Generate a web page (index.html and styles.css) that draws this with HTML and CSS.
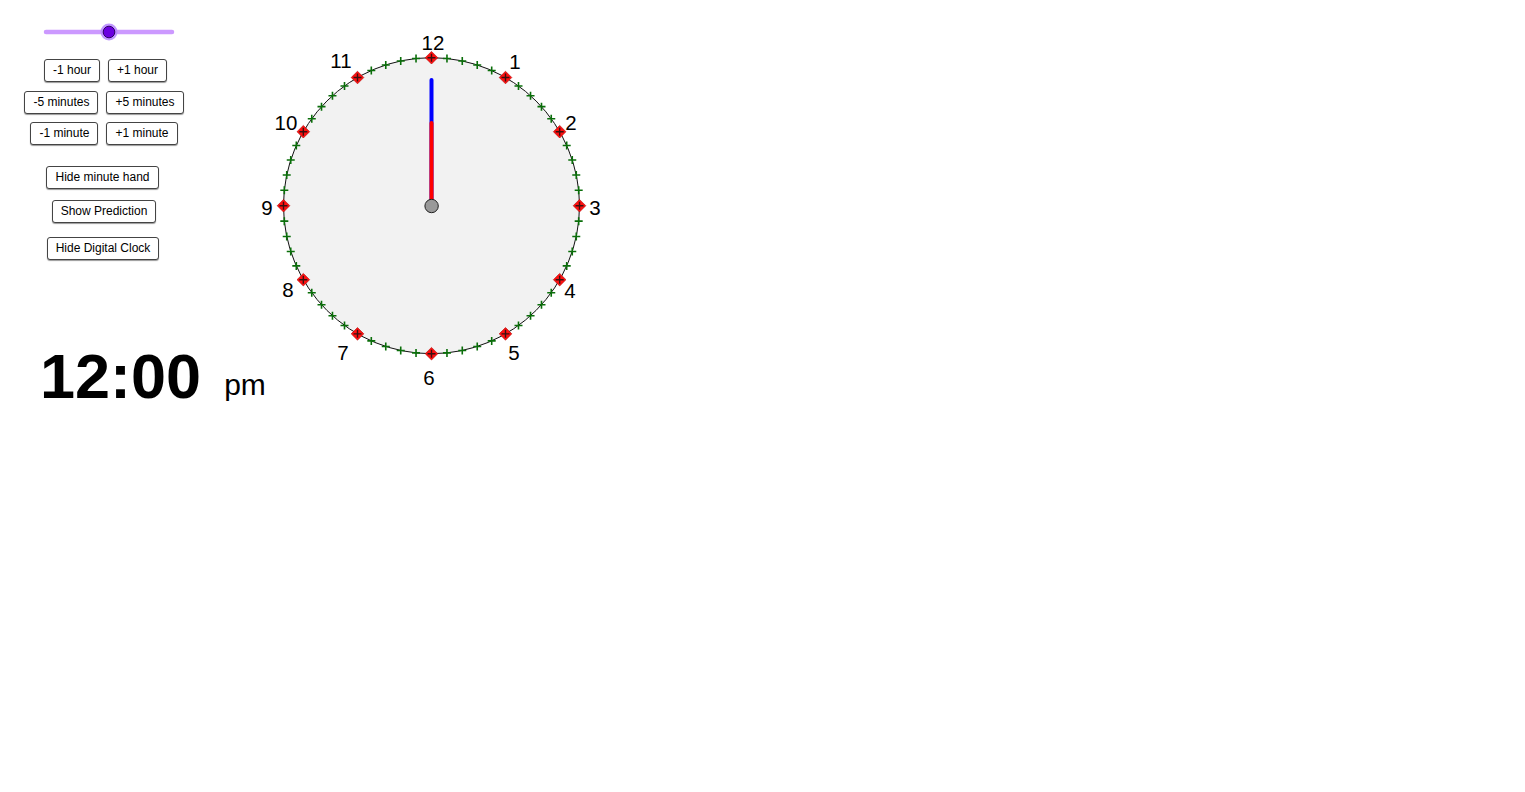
FILE: index.html
```html
<!DOCTYPE html>
<html>
<head>
<meta charset="utf-8">
<title>Clock</title>
<link rel="stylesheet" href="styles.css">
</head>
<body>
<div class="app">
  <div class="side">
    <div class="controls">
      <svg class="slider" width="140" height="18" viewBox="0 0 140 18">
        <line x1="7" y1="9" x2="133" y2="9" class="track"/>
        <circle cx="70" cy="9" r="8.5" class="halo"/>
        <circle cx="70" cy="9" r="5.8" class="knob"/>
      </svg>
      <div class="row row1">
        <button class="btn">-1 hour</button>
        <button class="btn">+1 hour</button>
      </div>
      <div class="row row2">
        <button class="btn">-5 minutes</button>
        <button class="btn">+5 minutes</button>
      </div>
      <div class="row row3">
        <button class="btn">-1 minute</button>
        <button class="btn">+1 minute</button>
      </div>
      <button class="btn wide hide-minute">Hide minute hand</button>
      <button class="btn wide show-pred">Show Prediction</button>
      <button class="btn wide hide-digital">Hide Digital Clock</button>
    </div>
    <div class="digital"><span class="time">12:00</span><span class="ampm">pm</span></div>
  </div>

  <svg class="clock" width="360" height="400" viewBox="255 0 360 400">
    <defs>
      <g id="m"><path d="M-4 0H4M0 -4V4" class="tick"/></g>
      <g id="h"><path d="M0 -6.3L6.3 0L0 6.3L-6.3 0Z" class="diamond"/><path d="M-4 0H4M0 -4V4" class="hplus"/></g>
    </defs>
    <circle cx="431.5" cy="205.7" r="148" class="face"/>
    <g class="ticks">
      <use href="#m" transform="rotate(0 431.5 205.7) translate(431.5 57.7) rotate(0)"/>
      <use href="#m" transform="rotate(6 431.5 205.7) translate(431.5 57.7) rotate(-6)"/>
      <use href="#m" transform="rotate(12 431.5 205.7) translate(431.5 57.7) rotate(-12)"/>
      <use href="#m" transform="rotate(18 431.5 205.7) translate(431.5 57.7) rotate(-18)"/>
      <use href="#m" transform="rotate(24 431.5 205.7) translate(431.5 57.7) rotate(-24)"/>
      <use href="#m" transform="rotate(36 431.5 205.7) translate(431.5 57.7) rotate(-36)"/>
      <use href="#m" transform="rotate(42 431.5 205.7) translate(431.5 57.7) rotate(-42)"/>
      <use href="#m" transform="rotate(48 431.5 205.7) translate(431.5 57.7) rotate(-48)"/>
      <use href="#m" transform="rotate(54 431.5 205.7) translate(431.5 57.7) rotate(-54)"/>
      <use href="#m" transform="rotate(66 431.5 205.7) translate(431.5 57.7) rotate(-66)"/>
      <use href="#m" transform="rotate(72 431.5 205.7) translate(431.5 57.7) rotate(-72)"/>
      <use href="#m" transform="rotate(78 431.5 205.7) translate(431.5 57.7) rotate(-78)"/>
      <use href="#m" transform="rotate(84 431.5 205.7) translate(431.5 57.7) rotate(-84)"/>
      <use href="#m" transform="rotate(96 431.5 205.7) translate(431.5 57.7) rotate(-96)"/>
      <use href="#m" transform="rotate(102 431.5 205.7) translate(431.5 57.7) rotate(-102)"/>
      <use href="#m" transform="rotate(108 431.5 205.7) translate(431.5 57.7) rotate(-108)"/>
      <use href="#m" transform="rotate(114 431.5 205.7) translate(431.5 57.7) rotate(-114)"/>
      <use href="#m" transform="rotate(126 431.5 205.7) translate(431.5 57.7) rotate(-126)"/>
      <use href="#m" transform="rotate(132 431.5 205.7) translate(431.5 57.7) rotate(-132)"/>
      <use href="#m" transform="rotate(138 431.5 205.7) translate(431.5 57.7) rotate(-138)"/>
      <use href="#m" transform="rotate(144 431.5 205.7) translate(431.5 57.7) rotate(-144)"/>
      <use href="#m" transform="rotate(156 431.5 205.7) translate(431.5 57.7) rotate(-156)"/>
      <use href="#m" transform="rotate(162 431.5 205.7) translate(431.5 57.7) rotate(-162)"/>
      <use href="#m" transform="rotate(168 431.5 205.7) translate(431.5 57.7) rotate(-168)"/>
      <use href="#m" transform="rotate(174 431.5 205.7) translate(431.5 57.7) rotate(-174)"/>
      <use href="#m" transform="rotate(186 431.5 205.7) translate(431.5 57.7) rotate(-186)"/>
      <use href="#m" transform="rotate(192 431.5 205.7) translate(431.5 57.7) rotate(-192)"/>
      <use href="#m" transform="rotate(198 431.5 205.7) translate(431.5 57.7) rotate(-198)"/>
      <use href="#m" transform="rotate(204 431.5 205.7) translate(431.5 57.7) rotate(-204)"/>
      <use href="#m" transform="rotate(216 431.5 205.7) translate(431.5 57.7) rotate(-216)"/>
      <use href="#m" transform="rotate(222 431.5 205.7) translate(431.5 57.7) rotate(-222)"/>
      <use href="#m" transform="rotate(228 431.5 205.7) translate(431.5 57.7) rotate(-228)"/>
      <use href="#m" transform="rotate(234 431.5 205.7) translate(431.5 57.7) rotate(-234)"/>
      <use href="#m" transform="rotate(246 431.5 205.7) translate(431.5 57.7) rotate(-246)"/>
      <use href="#m" transform="rotate(252 431.5 205.7) translate(431.5 57.7) rotate(-252)"/>
      <use href="#m" transform="rotate(258 431.5 205.7) translate(431.5 57.7) rotate(-258)"/>
      <use href="#m" transform="rotate(264 431.5 205.7) translate(431.5 57.7) rotate(-264)"/>
      <use href="#m" transform="rotate(276 431.5 205.7) translate(431.5 57.7) rotate(-276)"/>
      <use href="#m" transform="rotate(282 431.5 205.7) translate(431.5 57.7) rotate(-282)"/>
      <use href="#m" transform="rotate(288 431.5 205.7) translate(431.5 57.7) rotate(-288)"/>
      <use href="#m" transform="rotate(294 431.5 205.7) translate(431.5 57.7) rotate(-294)"/>
      <use href="#m" transform="rotate(306 431.5 205.7) translate(431.5 57.7) rotate(-306)"/>
      <use href="#m" transform="rotate(312 431.5 205.7) translate(431.5 57.7) rotate(-312)"/>
      <use href="#m" transform="rotate(318 431.5 205.7) translate(431.5 57.7) rotate(-318)"/>
      <use href="#m" transform="rotate(324 431.5 205.7) translate(431.5 57.7) rotate(-324)"/>
      <use href="#m" transform="rotate(336 431.5 205.7) translate(431.5 57.7) rotate(-336)"/>
      <use href="#m" transform="rotate(342 431.5 205.7) translate(431.5 57.7) rotate(-342)"/>
      <use href="#m" transform="rotate(348 431.5 205.7) translate(431.5 57.7) rotate(-348)"/>
      <use href="#m" transform="rotate(354 431.5 205.7) translate(431.5 57.7) rotate(-354)"/>
    </g>
    <g class="hours">
      <use href="#h" transform="rotate(0 431.5 205.7) translate(431.5 57.7) rotate(0)"/>
      <use href="#h" transform="rotate(30 431.5 205.7) translate(431.5 57.7) rotate(-30)"/>
      <use href="#h" transform="rotate(60 431.5 205.7) translate(431.5 57.7) rotate(-60)"/>
      <use href="#h" transform="rotate(90 431.5 205.7) translate(431.5 57.7) rotate(-90)"/>
      <use href="#h" transform="rotate(120 431.5 205.7) translate(431.5 57.7) rotate(-120)"/>
      <use href="#h" transform="rotate(150 431.5 205.7) translate(431.5 57.7) rotate(-150)"/>
      <use href="#h" transform="rotate(180 431.5 205.7) translate(431.5 57.7) rotate(-180)"/>
      <use href="#h" transform="rotate(210 431.5 205.7) translate(431.5 57.7) rotate(-210)"/>
      <use href="#h" transform="rotate(240 431.5 205.7) translate(431.5 57.7) rotate(-240)"/>
      <use href="#h" transform="rotate(270 431.5 205.7) translate(431.5 57.7) rotate(-270)"/>
      <use href="#h" transform="rotate(300 431.5 205.7) translate(431.5 57.7) rotate(-300)"/>
      <use href="#h" transform="rotate(330 431.5 205.7) translate(431.5 57.7) rotate(-330)"/>
    </g>
    <g class="nums">
      <text x="433" y="50">12</text>
      <text x="515" y="69">1</text>
      <text x="571" y="130">2</text>
      <text x="595" y="215">3</text>
      <text x="570" y="298">4</text>
      <text x="514" y="360">5</text>
      <text x="429" y="385">6</text>
      <text x="343" y="360">7</text>
      <text x="288" y="297">8</text>
      <text x="267" y="215">9</text>
      <text x="286" y="130">10</text>
      <text x="341" y="68">11</text>
    </g>
    <line x1="431.5" y1="205.7" x2="431.5" y2="80" class="minute-hand"/>
    <line x1="431.5" y1="205.7" x2="431.5" y2="123" class="hour-hand"/>
    <circle cx="431.6" cy="206" r="6.7" class="pivot"/>
  </svg>
</div>
</body>
</html>
```
FILE: styles.css
```css
html, body {
  margin: 0;
  padding: 0;
  background: #ffffff;
}
body {
  font-family: "Liberation Sans", Arial, sans-serif;
  color: #000;
}
.app {
  display: flex;
  align-items: flex-start;
}
.side {
  width: 255px;
  flex: none;
  display: flex;
  flex-direction: column;
}
.controls {
  width: 208px;
  display: flex;
  flex-direction: column;
  align-items: center;
}
.slider {
  display: block;
  margin-top: 23px;
  margin-left: 10px;
}
.slider .track {
  stroke: #cc99ff;
  stroke-width: 4.5;
  stroke-linecap: round;
}
.slider .halo {
  fill: #b585ff;
  opacity: 0.85;
}
.slider .knob {
  fill: #6a00e0;
  stroke: #2e0066;
  stroke-width: 1;
}
.row {
  display: flex;
  gap: 8px;
}
.row1 { margin-top: 18px; margin-left: 3px; }
.row2 { margin-top: 9px; }
.row3 { margin-top: 8px; }
.btn {
  font-family: "Liberation Sans", Arial, sans-serif;
  font-size: 12px;
  height: 23px;
  box-sizing: border-box;
  padding: 0 8px;
  background: #fff;
  color: #000;
  border: 1px solid #444;
  border-radius: 3px;
  box-shadow: 0 1px 1px rgba(0,0,0,0.4);
  line-height: 21px;
  white-space: nowrap;
}
.hide-minute { margin-top: 21px; margin-right: 3px; }
.show-pred { margin-top: 11px; }
.hide-digital { margin-top: 14px; margin-right: 2px; }
.digital {
  display: flex;
  align-items: baseline;
  margin-top: 84px;
  padding-left: 40px;
  white-space: nowrap;
}
.time {
  font-weight: bold;
  font-size: 63px;
  line-height: 64px;
}
.ampm {
  font-size: 30px;
  margin-left: 23px;
  position: relative;
  top: -3px;
}
.clock {
  display: block;
  flex: none;
  overflow: visible;
}
.face {
  fill: #f2f2f2;
  stroke: #111;
  stroke-width: 1;
}
.tick {
  stroke: #0a6e0a;
  stroke-width: 1.6;
  fill: none;
}
.diamond {
  fill: #ff1010;
  stroke: #b00000;
  stroke-width: 0.6;
}
.hplus {
  stroke: #3a1010;
  stroke-width: 1.4;
  fill: none;
}
.nums text {
  font-family: "Liberation Sans", Arial, sans-serif;
  font-size: 20.5px;
  text-anchor: middle;
  fill: #000;
}
.minute-hand {
  stroke: #0000ff;
  stroke-width: 4;
  stroke-linecap: round;
}
.hour-hand {
  stroke: #ff0000;
  stroke-width: 4;
  stroke-linecap: round;
}
.pivot {
  fill: #999999;
  stroke: #222;
  stroke-width: 1;
}
```
